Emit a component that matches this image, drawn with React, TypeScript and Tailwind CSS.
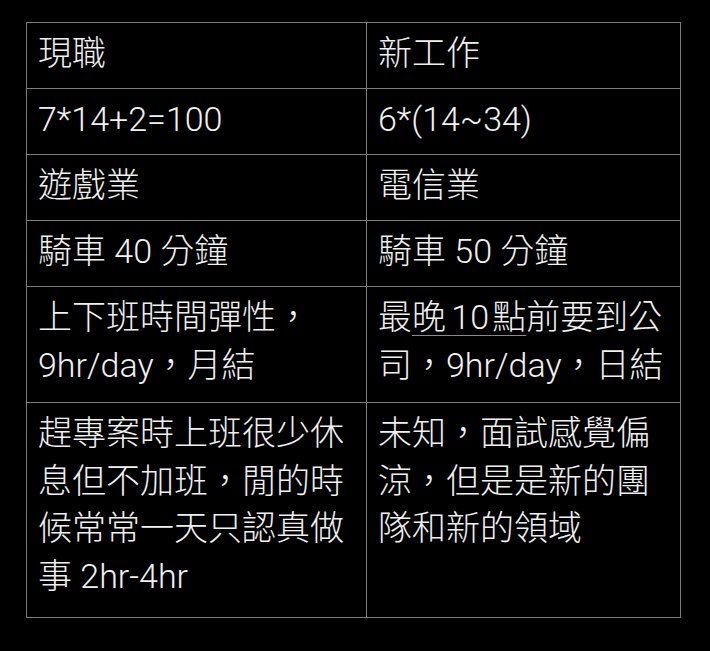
import React from "react";

const font = { fontFamily: 'Roboto, "Noto Sans CJK TC", sans-serif' };

export default function App() {
  const cell =
    "border border-[#7d7d7d] align-top pl-[11px] pr-[4px] pt-[7px] text-[34px] leading-[47.6px] text-[#f0f0f0] font-light";
  return (
    <div className="min-h-[651px] w-[710px] bg-black pl-[26px] pt-[22px]" style={font}>
      <table className="w-[654px] table-fixed border-collapse">
        <colgroup>
          <col className="w-[340px]" />
          <col className="w-[314px]" />
        </colgroup>
        <tbody>
          <tr className="h-[66px]">
            <td className={cell}>現職</td>
            <td className={cell}>新工作</td>
          </tr>
          <tr className="h-[66px]">
            <td className={cell}>7*14+2=100</td>
            <td className={cell}>6*(14~34)</td>
          </tr>
          <tr className="h-[66px]">
            <td className={cell}>遊戲業</td>
            <td className={cell}>電信業</td>
          </tr>
          <tr className="h-[66px]">
            <td className={cell}>騎車 40 分鐘</td>
            <td className={cell}>騎車 50 分鐘</td>
          </tr>
          <tr className="h-[116px]">
            <td className={cell}>
              上下班時間彈性，
              <br />
              9hr/day，月結
            </td>
            <td className={cell}>
              最
              <span className="underline decoration-[#8a8a8a] decoration-1 underline-offset-[6px]">
                晚<span className="tracking-[-3px]">{" "}</span>10<span className="tracking-[-5px]">{" "}</span>點
              </span>
              前要到公
              <br />
              司，9hr/day，日結
            </td>
          </tr>
          <tr className="h-[215px]">
            <td className={cell}>
              趕專案時上班很少休
              <br />
              息但不加班，閒的時
              <br />
              候常常一天只認真做
              <br />
              事 2hr-4hr
            </td>
            <td className={cell}>
              未知，面試感覺偏
              <br />
              涼，但是是新的團
              <br />
              隊和新的領域
            </td>
          </tr>
        </tbody>
      </table>
    </div>
  );
}
